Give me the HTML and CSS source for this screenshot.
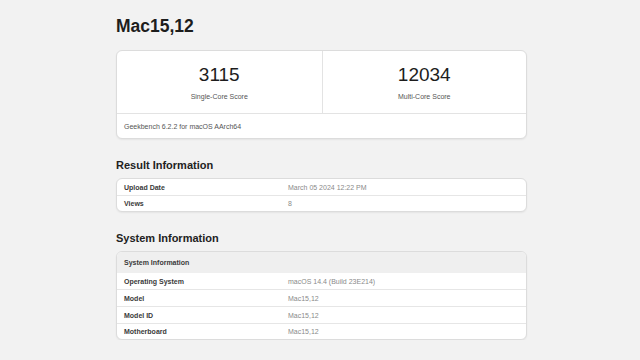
FILE: index.html
```html
<!DOCTYPE html>
<html lang="en">

<head>
    <meta charset="UTF-8">
    <meta name="viewport" content="width=device-width, initial-scale=1.0">
    <title>Mac15,12 - Geekbench</title>
    <link rel="stylesheet" href="styles.css">
</head>

<body>
    <div class="page">
        <h1 class="device">Mac15,12</h1>

        <div class="card">
            <div class="scores">
                <div class="score">
                    <div class="score-value">3115</div>
                    <div class="score-label">Single-Core Score</div>
                </div>
                <div class="score">
                    <div class="score-value">12034</div>
                    <div class="score-label">Multi-Core Score</div>
                </div>
            </div>
            <div class="card-footer">Geekbench 6.2.2 for macOS AArch64</div>
        </div>

        <h2 class="section-title">Result Information</h2>
        <div class="card">
            <div class="row">
                <span class="name">Upload Date</span>
                <span class="value">March 05 2024 12:22 PM</span>
            </div>
            <div class="row">
                <span class="name">Views</span>
                <span class="value">8</span>
            </div>
        </div>

        <h2 class="section-title">System Information</h2>
        <div class="card">
            <div class="row row-head">
                <span class="name">System Information</span>
            </div>
            <div class="row">
                <span class="name">Operating System</span>
                <span class="value">macOS 14.4 (Build 23E214)</span>
            </div>
            <div class="row">
                <span class="name">Model</span>
                <span class="value">Mac15,12</span>
            </div>
            <div class="row">
                <span class="name">Model ID</span>
                <span class="value">Mac15,12</span>
            </div>
            <div class="row">
                <span class="name">Motherboard</span>
                <span class="value">Mac15,12</span>
            </div>
        </div>
    </div>
</body>

</html>
```

FILE: styles.css
```css
* {
    margin: 0;
    padding: 0;
    box-sizing: border-box;
}

body {
    background-color: #f2f2f2;
    font-family: "Liberation Sans", Arial, sans-serif;
    color: #222;
    padding-left: 3px;
}

.page {
    width: 411px;
    margin: 0 auto;
    padding-top: 14px;
}

.device {
    font-size: 17.5px;
    line-height: 24px;
    font-weight: bold;
    color: #1d1d1d;
    margin-bottom: 12px;
}

.card {
    background-color: #fff;
    border: 1px solid #dcdcdc;
    border-radius: 6px;
    box-shadow: 0 1px 2px rgba(0, 0, 0, 0.06);
    overflow: hidden;
}

.scores {
    display: grid;
    grid-template-columns: 1fr 1fr;
}

.score {
    text-align: center;
    padding: 13px 0 11px;
}

.score + .score {
    border-left: 1px solid #e3e3e3;
}

.score-value {
    font-size: 19px;
    line-height: 22px;
    color: #1d1d1d;
}

.score-label {
    margin-top: 6px;
    font-size: 7px;
    line-height: 10px;
    color: #555;
}

.card-footer {
    border-top: 1px solid #e3e3e3;
    padding: 8px 7px 6px;
    font-size: 7px;
    line-height: 10px;
    color: #555;
}

.section-title {
    margin: 19px 0 6px;
    font-size: 11px;
    line-height: 14px;
    font-weight: bold;
    color: #222;
}

.row {
    display: grid;
    grid-template-columns: 164px 1fr;
    padding: 0 7px;
    height: 17px;
    align-items: center;
    font-size: 7px;
    border-top: 1px solid #e6e6e6;
}

.row:first-child,
.row-head + .row {
    border-top: none;
    height: 16px;
}

.row:last-child {
    height: 16px;
}

.row-head,
.row:first-child.row-head {
    height: 21px;
    background-color: #efefef;
}

.name {
    font-weight: bold;
    color: #3a3a3a;
}

.value {
    color: #8a8a8a;
}
```
